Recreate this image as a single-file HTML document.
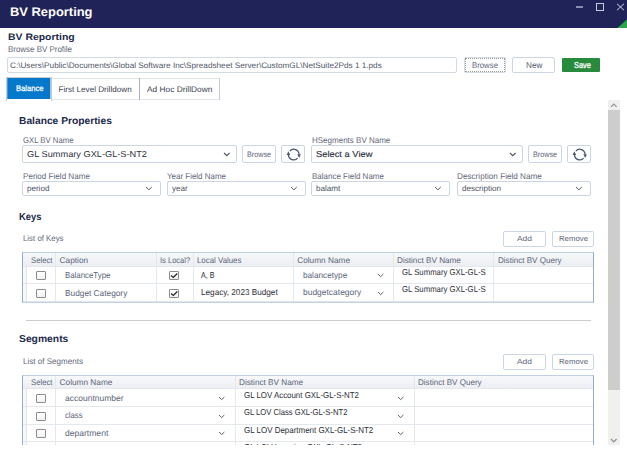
<!DOCTYPE html>
<html><head><meta charset="utf-8">
<style>
*{box-sizing:border-box;margin:0;padding:0}
html,body{width:627px;height:449px;overflow:hidden;background:#fff;font-family:"Liberation Sans",sans-serif;position:relative}
.a{position:absolute;white-space:nowrap;text-rendering:geometricPrecision}
svg.a{overflow:visible}
</style></head><body>
<div class="a" style="left:0px;top:0px;width:627px;height:28px;background:#1f2357"></div>
<div class="a" style="left:10.00px;top:6.12px;font-size:12.5px;line-height:12.5px;color:#ffffff;font-weight:bold;transform:scaleX(1.0331);transform-origin:0 0;">BV Reporting</div>
<div class="a" style="left:575.5px;top:6.2px;width:7.2000000000000455px;height:1.5999999999999996px;background:#8a8eae"></div>
<div class="a" style="left:596px;top:3px;width:8px;height:8px;border:1px solid #c9cbdc"></div>
<svg class="a" style="left:616px;top:3px" width="9" height="8"><path d="M1,0.8 L8,7.2 M8,0.8 L1,7.2" stroke="#d2d4e2" stroke-width="1.0"/></svg>
<svg class="a" style="left:616px;top:19px" width="11" height="9"><polygon points="1.3,9 11,9 11,0.5" fill="#2da44a"/></svg>
<div class="a" style="left:8.30px;top:32.83px;font-size:9.3px;line-height:9.3px;color:#1d2a4b;font-weight:bold;transform:scaleX(1.1226);transform-origin:0 0;">BV Reporting</div>
<div class="a" style="left:8.00px;top:45.46px;font-size:8.43px;line-height:8.43px;color:#5f6879;transform:scaleX(0.9421);transform-origin:0 0;">Browse BV Profile</div>
<div class="a" style="left:7px;top:57px;width:450px;height:16px;border:1px solid #d2dae6;border-radius:2px"></div>
<div class="a" style="left:9.80px;top:62.14px;font-size:7.99px;line-height:7.99px;color:#4f5767;transform:scaleX(1.0253);transform-origin:0 0;">C:\Users\Public\Documents\Global Software Inc\Spreadsheet Server\CustomGL\NetSuite2Pds 1 1.pds</div>
<div class="a" style="left:464px;top:57px;width:42px;height:16px;border:1px solid #d3dbe7;border-radius:2px"></div>
<div class="a" style="left:465px;top:58px;width:40px;height:14px;border:1px dotted #999"></div>
<div class="a" style="left:471.70px;top:62.09px;font-size:8.28px;line-height:8.28px;color:#5b6579;transform:scaleX(0.9417);transform-origin:0 0;">Browse</div>
<div class="a" style="left:512px;top:57px;width:43px;height:16px;border:1px solid #cbd5e3;border-radius:2px;background:#fff"></div>
<div class="a" style="left:525.70px;top:61.46px;font-size:8.43px;line-height:8.43px;color:#535b6c;transform:scaleX(0.9665);transform-origin:0 0;">New</div>
<div class="a" style="left:562px;top:58px;width:38px;height:14px;background:#288a3c;border-radius:1px"></div>
<div class="a" style="left:574.00px;top:61.12px;font-size:8.72px;line-height:8.72px;color:#ffffff;transform:scaleX(0.8453);transform-origin:0 0;-webkit-text-stroke:0.3px #fff;">Save</div>
<div class="a" style="left:6px;top:77px;width:46px;height:24px;border:1px solid #c9cbce;border-bottom:none"></div>
<div class="a" style="left:8px;top:78px;width:42px;height:21px;background:#0478ca"></div>
<div class="a" style="left:7px;top:78px;width:1px;height:21px;background:#4f97d6"></div>
<div class="a" style="left:50px;top:78px;width:1px;height:21px;background:#9cc6ea"></div>
<div class="a" style="left:15.50px;top:84.61px;font-size:8.14px;line-height:8.14px;color:#ffffff;transform:scaleX(0.9383);transform-origin:0 0;-webkit-text-stroke:0.25px #fff;">Balance</div>
<div class="a" style="left:52px;top:78px;width:168px;height:22px;border:1px solid #e1e5eb;border-left:none;border-right:1px solid #c6cad2"></div>
<div class="a" style="left:139px;top:78px;width:1px;height:22px;background:#a9b0bb"></div>
<div class="a" style="left:58.50px;top:85.71px;font-size:8.14px;line-height:8.14px;color:#3d4352;">First Level Drilldown</div>
<div class="a" style="left:147.00px;top:86.11px;font-size:8.14px;line-height:8.14px;color:#3d4352;transform:scaleX(1.0254);transform-origin:0 0;">Ad Hoc DrillDown</div>
<div class="a" style="left:608px;top:100px;width:12px;height:345px;background:#f0f0f0"></div>
<div class="a" style="left:608px;top:110px;width:12px;height:280px;background:#cdcdcd"></div>
<svg class="a" style="left:609.20px;top:101.95px" width="9.60" height="6.90"><polyline points="2,4.90 4.80,2 7.60,4.90" fill="none" stroke="#959595" stroke-width="1.2"/></svg>
<svg class="a" style="left:609.30px;top:436.95px" width="9.60" height="6.90"><polyline points="2,2 4.80,4.90 7.60,2" fill="none" stroke="#8f8f8f" stroke-width="1.3"/></svg>
<div class="a" style="left:19.20px;top:117.01px;font-size:10.03px;line-height:10.03px;color:#1d2a4b;font-weight:bold;transform:scaleX(1.0235);transform-origin:0 0;">Balance Properties</div>
<div class="a" style="left:22.70px;top:136.46px;font-size:8.43px;line-height:8.43px;color:#5f6879;transform:scaleX(0.9186);transform-origin:0 0;">GXL BV Name</div>
<div class="a" style="left:22px;top:145px;width:215px;height:18px;border:1px solid #cbd5e3;border-radius:2px;background:#fff"></div>
<div class="a" style="left:26.50px;top:150.14px;font-size:8.58px;line-height:8.58px;color:#2d3240;transform:scaleX(1.0741);transform-origin:0 0;">GL Summary GXL-GL-S-NT2</div>
<svg class="a" style="left:222.10px;top:150.75px" width="9.60" height="6.70"><polyline points="2,2 4.80,4.70 7.60,2" fill="none" stroke="#4d5566" stroke-width="1.1"/></svg>
<div class="a" style="left:242px;top:145px;width:34px;height:18px;border:1px solid #cbd5e3;border-radius:2px;background:#fff"></div>
<div class="a" style="left:247.20px;top:150.65px;font-size:7.85px;line-height:7.85px;color:#5b6579;transform:scaleX(0.9169);transform-origin:0 0;">Browse</div>
<div class="a" style="left:281px;top:145px;width:24px;height:18px;border:1px solid #cbd5e3;border-radius:2px;background:#fff"></div>
<svg class="a" style="left:281px;top:145px" width="24" height="18">
<path d="M8.81,6.05 A5.3,5.3 0 0 1 18.04,9.32" fill="none" stroke="#48556b" stroke-width="1.25"/>
<path d="M16.69,13.15 A5.3,5.3 0 0 1 7.46,9.88" fill="none" stroke="#48556b" stroke-width="1.25"/>
<polygon points="16.35,9.20 19.85,9.20 18.15,12.90" fill="#48556b"/>
<polygon points="9.15,10.00 5.65,10.00 7.35,6.30" fill="#48556b"/>
</svg>
<div class="a" style="left:312.20px;top:136.46px;font-size:8.43px;line-height:8.43px;color:#5f6879;transform:scaleX(0.9508);transform-origin:0 0;">HSegments BV Name</div>
<div class="a" style="left:311px;top:145px;width:212px;height:18px;border:1px solid #cbd5e3;border-radius:2px;background:#fff"></div>
<div class="a" style="left:315.80px;top:150.14px;font-size:8.58px;line-height:8.58px;color:#2d3240;transform:scaleX(1.0882);transform-origin:0 0;-webkit-text-stroke:0.15px #2d3240;">Select a View</div>
<svg class="a" style="left:507.80px;top:150.75px" width="9.60" height="6.70"><polyline points="2,2 4.80,4.70 7.60,2" fill="none" stroke="#4d5566" stroke-width="1.1"/></svg>
<div class="a" style="left:528px;top:145px;width:34px;height:18px;border:1px solid #cbd5e3;border-radius:2px;background:#fff"></div>
<div class="a" style="left:533.00px;top:150.65px;font-size:7.85px;line-height:7.85px;color:#5b6579;transform:scaleX(0.9169);transform-origin:0 0;">Browse</div>
<div class="a" style="left:567px;top:145px;width:24px;height:18px;border:1px solid #cbd5e3;border-radius:2px;background:#fff"></div>
<svg class="a" style="left:567px;top:145px" width="24" height="18">
<path d="M8.81,6.05 A5.3,5.3 0 0 1 18.04,9.32" fill="none" stroke="#48556b" stroke-width="1.25"/>
<path d="M16.69,13.15 A5.3,5.3 0 0 1 7.46,9.88" fill="none" stroke="#48556b" stroke-width="1.25"/>
<polygon points="16.35,9.20 19.85,9.20 18.15,12.90" fill="#48556b"/>
<polygon points="9.15,10.00 5.65,10.00 7.35,6.30" fill="#48556b"/>
</svg>
<div class="a" style="left:22.70px;top:172.46px;font-size:8.43px;line-height:8.43px;color:#5f6879;transform:scaleX(0.9597);transform-origin:0 0;">Period Field Name</div>
<div class="a" style="left:22px;top:181px;width:139px;height:15px;border:1px solid #cbd5e3;border-radius:2px;background:#fff"></div>
<div class="a" style="left:26.90px;top:184.54px;font-size:8.1px;line-height:8.1px;color:#4a5162;">period</div>
<svg class="a" style="left:143.90px;top:184.70px" width="9.80" height="6.80"><polyline points="2,2 4.90,4.80 7.80,2" fill="none" stroke="#555d6d" stroke-width="1.0"/></svg>
<div class="a" style="left:167.30px;top:172.46px;font-size:8.43px;line-height:8.43px;color:#5f6879;transform:scaleX(0.9444);transform-origin:0 0;">Year Field Name</div>
<div class="a" style="left:167px;top:181px;width:139px;height:15px;border:1px solid #cbd5e3;border-radius:2px;background:#fff"></div>
<div class="a" style="left:171.90px;top:184.54px;font-size:8.1px;line-height:8.1px;color:#4a5162;">year</div>
<svg class="a" style="left:288.90px;top:184.70px" width="9.80" height="6.80"><polyline points="2,2 4.90,4.80 7.80,2" fill="none" stroke="#555d6d" stroke-width="1.0"/></svg>
<div class="a" style="left:312.20px;top:172.46px;font-size:8.43px;line-height:8.43px;color:#5f6879;transform:scaleX(0.9485);transform-origin:0 0;">Balance Field Name</div>
<div class="a" style="left:311px;top:181px;width:139px;height:15px;border:1px solid #cbd5e3;border-radius:2px;background:#fff"></div>
<div class="a" style="left:315.90px;top:184.54px;font-size:8.1px;line-height:8.1px;color:#4a5162;">balamt</div>
<svg class="a" style="left:432.90px;top:184.70px" width="9.80" height="6.80"><polyline points="2,2 4.90,4.80 7.80,2" fill="none" stroke="#555d6d" stroke-width="1.0"/></svg>
<div class="a" style="left:457.10px;top:172.46px;font-size:8.43px;line-height:8.43px;color:#5f6879;transform:scaleX(0.9702);transform-origin:0 0;">Description Field Name</div>
<div class="a" style="left:457px;top:181px;width:134px;height:15px;border:1px solid #cbd5e3;border-radius:2px;background:#fff"></div>
<div class="a" style="left:461.90px;top:184.54px;font-size:8.1px;line-height:8.1px;color:#4a5162;">description</div>
<svg class="a" style="left:573.90px;top:184.70px" width="9.80" height="6.80"><polyline points="2,2 4.90,4.80 7.80,2" fill="none" stroke="#555d6d" stroke-width="1.0"/></svg>
<div class="a" style="left:19.30px;top:212.51px;font-size:10.03px;line-height:10.03px;color:#1d2a4b;font-weight:bold;transform:scaleX(0.9384);transform-origin:0 0;">Keys</div>
<div class="a" style="left:22.80px;top:234.59px;font-size:8.28px;line-height:8.28px;color:#5f6879;transform:scaleX(0.9486);transform-origin:0 0;">List of Keys</div>
<div class="a" style="left:503px;top:231px;width:43px;height:16px;border:1px solid #cbd5e3;border-radius:2px;background:#fff"></div>
<div class="a" style="left:517.10px;top:235.03px;font-size:7.41px;line-height:7.41px;color:#5b6579;transform:scaleX(1.1377);transform-origin:0 0;">Add</div>
<div class="a" style="left:552px;top:231px;width:42px;height:16px;border:1px solid #cbd5e3;border-radius:2px;background:#fff"></div>
<div class="a" style="left:558.70px;top:235.03px;font-size:7.41px;line-height:7.41px;color:#5b6579;transform:scaleX(1.0510);transform-origin:0 0;">Remove</div>
<div class="a" style="left:22px;top:252px;width:572px;height:51px;border:1px solid #93add0;border-top-color:#c0cee2;border-bottom-color:#c3d0e2"></div>
<div class="a" style="left:23px;top:301px;width:570px;height:1px;background:#dfe6ef"></div>
<div class="a" style="left:23px;top:253px;width:570px;height:13px;background:linear-gradient(#f7f8fa,#eceef2)"></div>
<div class="a" style="left:23px;top:266px;width:4px;height:35px;background:linear-gradient(90deg,#fafafa,#f3f3f3)"></div>
<div class="a" style="left:26px;top:266px;width:1px;height:35px;background:#e6e6e6"></div>
<div class="a" style="left:23px;top:266px;width:570px;height:1px;background:#e3e7ee"></div>
<div class="a" style="left:23px;top:283px;width:570px;height:1px;background:#e3e7ee"></div>
<div class="a" style="left:55px;top:253px;width:1px;height:48px;background:#e3e7ee"></div>
<div class="a" style="left:156px;top:253px;width:1px;height:48px;background:#e3e7ee"></div>
<div class="a" style="left:193px;top:253px;width:1px;height:48px;background:#e3e7ee"></div>
<div class="a" style="left:293px;top:253px;width:1px;height:48px;background:#e3e7ee"></div>
<div class="a" style="left:393px;top:253px;width:1px;height:48px;background:#e3e7ee"></div>
<div class="a" style="left:493px;top:253px;width:1px;height:48px;background:#e3e7ee"></div>
<div class="a" style="left:30.90px;top:256.69px;font-size:8.28px;line-height:8.28px;color:#5b6579;transform:scaleX(0.9343);transform-origin:0 0;">Select</div>
<div class="a" style="left:59.60px;top:256.69px;font-size:8.28px;line-height:8.28px;color:#5b6579;">Caption</div>
<div class="a" style="left:159.80px;top:256.69px;font-size:8.28px;line-height:8.28px;color:#5b6579;transform:scaleX(0.9113);transform-origin:0 0;">Is Local?</div>
<div class="a" style="left:197.40px;top:256.69px;font-size:8.28px;line-height:8.28px;color:#5b6579;transform:scaleX(0.9509);transform-origin:0 0;">Local Values</div>
<div class="a" style="left:297.20px;top:256.69px;font-size:8.28px;line-height:8.28px;color:#5b6579;">Column Name</div>
<div class="a" style="left:397.40px;top:256.69px;font-size:8.28px;line-height:8.28px;color:#5b6579;transform:scaleX(0.9865);transform-origin:0 0;">Distinct BV Name</div>
<div class="a" style="left:497.80px;top:256.69px;font-size:8.28px;line-height:8.28px;color:#5b6579;transform:scaleX(0.9749);transform-origin:0 0;">Distinct BV Query</div>
<div class="a" style="left:36px;top:271px;width:10px;height:9px;border:1px solid #8c8c8c;background:linear-gradient(#fff,#f2f2f2);border-radius:1px"></div>
<div class="a" style="left:64.50px;top:271.24px;font-size:8.58px;line-height:8.58px;color:#5b6579;transform:scaleX(0.9152);transform-origin:0 0;">BalanceType</div>
<div class="a" style="left:169px;top:271px;width:10px;height:9px;border:1px solid #8c8c8c;background:linear-gradient(#fff,#f2f2f2);border-radius:1px"></div>
<svg class="a" style="left:169px;top:271px" width="10" height="9"><polyline points="2.1,4.5 4.3,6.4 8.3,2.5" fill="none" stroke="#222" stroke-width="1.25"/></svg>
<div class="a" style="left:201.00px;top:271.04px;font-size:8.58px;line-height:8.58px;color:#2c2f38;transform:scaleX(0.8265);transform-origin:0 0;">A, B</div>
<div class="a" style="left:303.20px;top:270.94px;font-size:8.58px;line-height:8.58px;color:#5b6579;transform:scaleX(0.9552);transform-origin:0 0;">balancetype</div>
<svg class="a" style="left:375.80px;top:272.40px" width="9.40" height="6.60"><polyline points="2,2 4.70,4.60 7.40,2" fill="none" stroke="#5a6270" stroke-width="1.0"/></svg>
<div class="a" style="left:402.40px;top:267.64px;font-size:8.58px;line-height:8.58px;color:#2c2f38;transform:scaleX(0.9034);transform-origin:0 0;">GL Summary GXL-GL-S</div>
<div class="a" style="left:36px;top:289px;width:10px;height:9px;border:1px solid #8c8c8c;background:linear-gradient(#fff,#f2f2f2);border-radius:1px"></div>
<div class="a" style="left:64.50px;top:288.64px;font-size:8.58px;line-height:8.58px;color:#5b6579;transform:scaleX(0.9675);transform-origin:0 0;">Budget Category</div>
<div class="a" style="left:169px;top:289px;width:10px;height:9px;border:1px solid #8c8c8c;background:linear-gradient(#fff,#f2f2f2);border-radius:1px"></div>
<svg class="a" style="left:169px;top:289px" width="10" height="9"><polyline points="2.1,4.5 4.3,6.4 8.3,2.5" fill="none" stroke="#222" stroke-width="1.25"/></svg>
<div class="a" style="left:201.00px;top:288.44px;font-size:8.58px;line-height:8.58px;color:#2c2f38;transform:scaleX(0.9532);transform-origin:0 0;">Legacy, 2023 Budget</div>
<div class="a" style="left:303.20px;top:288.34px;font-size:8.58px;line-height:8.58px;color:#5b6579;transform:scaleX(0.9856);transform-origin:0 0;">budgetcategory</div>
<svg class="a" style="left:375.80px;top:289.80px" width="9.40" height="6.60"><polyline points="2,2 4.70,4.60 7.40,2" fill="none" stroke="#5a6270" stroke-width="1.0"/></svg>
<div class="a" style="left:402.40px;top:285.04px;font-size:8.58px;line-height:8.58px;color:#2c2f38;transform:scaleX(0.9034);transform-origin:0 0;">GL Summary GXL-GL-S</div>
<div class="a" style="left:26px;top:320px;width:565px;height:1px;background:#cdcdcd"></div>
<div class="a" style="left:19.20px;top:335.01px;font-size:10.03px;line-height:10.03px;color:#1d2a4b;font-weight:bold;transform:scaleX(1.0305);transform-origin:0 0;">Segments</div>
<div class="a" style="left:22.90px;top:357.59px;font-size:8.28px;line-height:8.28px;color:#5f6879;transform:scaleX(0.9729);transform-origin:0 0;">List of Segments</div>
<div class="a" style="left:503px;top:354px;width:43px;height:16px;border:1px solid #cbd5e3;border-radius:2px;background:#fff"></div>
<div class="a" style="left:517.10px;top:358.43px;font-size:7.41px;line-height:7.41px;color:#5b6579;transform:scaleX(1.1377);transform-origin:0 0;">Add</div>
<div class="a" style="left:552px;top:354px;width:42px;height:16px;border:1px solid #cbd5e3;border-radius:2px;background:#fff"></div>
<div class="a" style="left:558.70px;top:358.43px;font-size:7.41px;line-height:7.41px;color:#5b6579;transform:scaleX(1.0510);transform-origin:0 0;">Remove</div>
<div class="a" style="left:0;top:0;width:627px;height:445px;overflow:hidden">
<div class="a" style="left:22px;top:375px;width:572px;height:96px;border:1px solid #93add0;border-top-color:#c0cee2"></div>
<div class="a" style="left:23px;top:376px;width:570px;height:13px;background:linear-gradient(#f7f8fa,#eceef2)"></div>
<div class="a" style="left:23px;top:389px;width:4px;height:82px;background:linear-gradient(90deg,#fafafa,#f3f3f3)"></div>
<div class="a" style="left:26px;top:389px;width:1px;height:82px;background:#e6e6e6"></div>
<div class="a" style="left:23px;top:388px;width:570px;height:1px;background:#e3e7ee"></div>
<div class="a" style="left:23px;top:406px;width:570px;height:1px;background:#e3e7ee"></div>
<div class="a" style="left:23px;top:424px;width:570px;height:1px;background:#e3e7ee"></div>
<div class="a" style="left:23px;top:441px;width:570px;height:1px;background:#e3e7ee"></div>
<div class="a" style="left:55px;top:376px;width:1px;height:95px;background:#e3e7ee"></div>
<div class="a" style="left:235px;top:376px;width:1px;height:95px;background:#e3e7ee"></div>
<div class="a" style="left:414px;top:376px;width:1px;height:95px;background:#e3e7ee"></div>
<div class="a" style="left:30.50px;top:378.89px;font-size:8.28px;line-height:8.28px;color:#5b6579;transform:scaleX(0.9343);transform-origin:0 0;">Select</div>
<div class="a" style="left:59.60px;top:378.89px;font-size:8.28px;line-height:8.28px;color:#5b6579;">Column Name</div>
<div class="a" style="left:238.80px;top:378.89px;font-size:8.28px;line-height:8.28px;color:#5b6579;transform:scaleX(0.9896);transform-origin:0 0;">Distinct BV Name</div>
<div class="a" style="left:418.40px;top:378.89px;font-size:8.28px;line-height:8.28px;color:#5b6579;transform:scaleX(0.9749);transform-origin:0 0;">Distinct BV Query</div>
<div class="a" style="left:36px;top:394px;width:10px;height:9px;border:1px solid #8c8c8c;background:linear-gradient(#fff,#f2f2f2);border-radius:1px"></div>
<div class="a" style="left:64.90px;top:393.74px;font-size:8.58px;line-height:8.58px;color:#5b6579;transform:scaleX(0.9908);transform-origin:0 0;">accountnumber</div>
<svg class="a" style="left:217.10px;top:395.10px" width="9.40" height="6.60"><polyline points="2,2 4.70,4.60 7.40,2" fill="none" stroke="#5a6270" stroke-width="1.0"/></svg>
<div class="a" style="left:244.00px;top:390.84px;font-size:8.58px;line-height:8.58px;color:#2c2f38;transform:scaleX(0.9193);transform-origin:0 0;">GL LOV Account GXL-GL-S-NT2</div>
<svg class="a" style="left:396.30px;top:395.10px" width="9.40" height="6.60"><polyline points="2,2 4.70,4.60 7.40,2" fill="none" stroke="#5a6270" stroke-width="1.0"/></svg>
<div class="a" style="left:36px;top:412px;width:10px;height:9px;border:1px solid #8c8c8c;background:linear-gradient(#fff,#f2f2f2);border-radius:1px"></div>
<div class="a" style="left:64.90px;top:411.34px;font-size:8.58px;line-height:8.58px;color:#5b6579;transform:scaleX(0.9003);transform-origin:0 0;">class</div>
<svg class="a" style="left:217.10px;top:412.70px" width="9.40" height="6.60"><polyline points="2,2 4.70,4.60 7.40,2" fill="none" stroke="#5a6270" stroke-width="1.0"/></svg>
<div class="a" style="left:244.00px;top:408.44px;font-size:8.58px;line-height:8.58px;color:#2c2f38;transform:scaleX(0.8921);transform-origin:0 0;">GL LOV Class GXL-GL-S-NT2</div>
<svg class="a" style="left:396.30px;top:412.70px" width="9.40" height="6.60"><polyline points="2,2 4.70,4.60 7.40,2" fill="none" stroke="#5a6270" stroke-width="1.0"/></svg>
<div class="a" style="left:36px;top:429px;width:10px;height:9px;border:1px solid #8c8c8c;background:linear-gradient(#fff,#f2f2f2);border-radius:1px"></div>
<div class="a" style="left:64.90px;top:428.94px;font-size:8.58px;line-height:8.58px;color:#5b6579;">department</div>
<svg class="a" style="left:217.10px;top:430.30px" width="9.40" height="6.60"><polyline points="2,2 4.70,4.60 7.40,2" fill="none" stroke="#5a6270" stroke-width="1.0"/></svg>
<div class="a" style="left:244.00px;top:426.04px;font-size:8.58px;line-height:8.58px;color:#2c2f38;transform:scaleX(0.9269);transform-origin:0 0;">GL LOV Department GXL-GL-S-NT2</div>
<svg class="a" style="left:396.30px;top:430.30px" width="9.40" height="6.60"><polyline points="2,2 4.70,4.60 7.40,2" fill="none" stroke="#5a6270" stroke-width="1.0"/></svg>
<div class="a" style="left:36px;top:447px;width:10px;height:9px;border:1px solid #8c8c8c;background:linear-gradient(#fff,#f2f2f2);border-radius:1px"></div>
<div class="a" style="left:64.90px;top:445.94px;font-size:8.58px;line-height:8.58px;color:#5b6579;transform:scaleX(1.0144);transform-origin:0 0;">location</div>
<svg class="a" style="left:217.10px;top:447.30px" width="9.40" height="6.60"><polyline points="2,2 4.70,4.60 7.40,2" fill="none" stroke="#5a6270" stroke-width="1.0"/></svg>
<div class="a" style="left:244.00px;top:443.04px;font-size:8.58px;line-height:8.58px;color:#2c2f38;transform:scaleX(0.9291);transform-origin:0 0;">GL LOV Location GXL-GL-S-NT2</div>
<svg class="a" style="left:396.30px;top:447.30px" width="9.40" height="6.60"><polyline points="2,2 4.70,4.60 7.40,2" fill="none" stroke="#5a6270" stroke-width="1.0"/></svg>
</div>
</body></html>
